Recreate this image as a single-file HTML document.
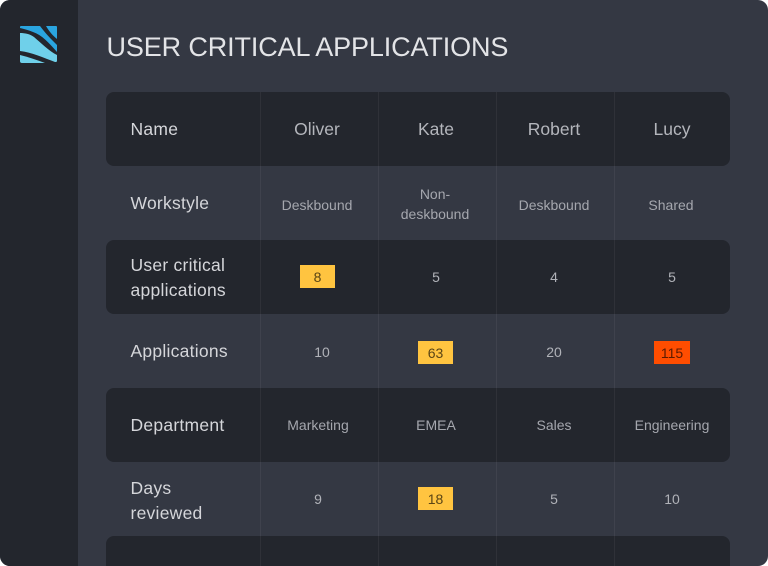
<!DOCTYPE html>
<html><head><meta charset="utf-8">
<style>
html,body{margin:0;padding:0;background:#fff;width:768px;height:566px;overflow:hidden}
#p{position:relative;width:768px;height:566px;overflow:hidden;background:#fff;font-family:"Liberation Sans",sans-serif}
#frame{position:absolute;left:0;top:0;width:768px;height:566px;background:#343843;border-radius:10px;overflow:hidden}
#side{position:absolute;left:0;top:0;width:78px;height:566px;background:#23262d}
.r{position:absolute;left:106px;width:624px;height:74px;background:#23262d;border-radius:8px}
.v{position:absolute;top:92px;width:1px;height:474px;background:rgba(255,255,255,.055)}
.t{position:absolute;white-space:nowrap;line-height:25px;color:#d5d6da;font-size:17.5px;letter-spacing:.25px}
.c{position:absolute;transform:translateX(-50%);white-space:nowrap;text-align:center}
.h{font-size:17.5px;line-height:24px;color:#b4b6bc}
.s{font-size:14px;line-height:20px;color:#a5a7ae}
.n{font-size:14px;line-height:19px;color:#b0b2b8}
.b{position:absolute;width:35px;height:23px;line-height:24px;text-align:center;font-size:14px;background:#ffc440;color:#5a4515}
.b.o{background:#ff4d00;color:#5c1a00;width:36px}
h1{position:absolute;left:106.5px;top:30px;margin:0;font-weight:400;font-size:27px;line-height:34px;color:#e3e4e7;white-space:nowrap;letter-spacing:-.13px}
</style></head>
<body><div id="p"><div id="frame">
<div id="side"></div>
<svg style="position:absolute;left:19px;top:25px" width="39" height="39" viewBox="0 0 39 39">
<path d="M1 2Q1 1 2 1H21C27 9 32 14 38 20V27C30 18 23 10 14 7C9 5 5 4 1 3Z" fill="#2aa5e0"/>
<path d="M27 1H37Q38 1 38 2V14C33 10 30 6 27 1Z" fill="#2aa5e0"/>
<path d="M1 8C6 8 11 9 15 12C22 18 30 26 38 30V36Q38 37 36 37C25 33 12 27 1 26Z" fill="#6fd0ea"/>
<path d="M1 30C9 32 18 35 26 38H3Q1 38 1 36Z" fill="#6fd0ea"/>
</svg>
<h1>USER CRITICAL APPLICATIONS</h1>
<div class="r" style="top:92px"></div>
<div class="r" style="top:240px"></div>
<div class="r" style="top:388px"></div>
<div class="r" style="top:536px;height:30px;border-radius:8px 8px 0 0"></div>
<div class="v" style="left:260px"></div>
<div class="v" style="left:378px"></div>
<div class="v" style="left:496px"></div>
<div class="v" style="left:614px"></div>

<div class="t" style="left:130.5px;top:117px">Name</div>
<div class="t" style="left:130.5px;top:191px">Workstyle</div>
<div class="t" style="left:130.5px;top:253px">User critical<br>applications</div>
<div class="t" style="left:130.5px;top:339px">Applications</div>
<div class="t" style="left:130.5px;top:413px">Department</div>
<div class="t" style="left:130.5px;top:476px">Days<br>reviewed</div>

<div class="c h" style="left:317px;top:117px">Oliver</div>
<div class="c h" style="left:436px;top:117px">Kate</div>
<div class="c h" style="left:554px;top:117px">Robert</div>
<div class="c h" style="left:672px;top:117px">Lucy</div>

<div class="c s" style="left:317px;top:195px">Deskbound</div>
<div class="c s" style="left:435px;top:184px">Non-<br>deskbound</div>
<div class="c s" style="left:554px;top:195px">Deskbound</div>
<div class="c s" style="left:671px;top:195px">Shared</div>

<div class="b" style="left:300px;top:265px">8</div>
<div class="c n" style="left:436px;top:268px">5</div>
<div class="c n" style="left:554px;top:268px">4</div>
<div class="c n" style="left:672px;top:268px">5</div>

<div class="c n" style="left:322px;top:343px">10</div>
<div class="b" style="left:418px;top:341px">63</div>
<div class="c n" style="left:554px;top:343px">20</div>
<div class="b o" style="left:654px;top:341px">115</div>

<div class="c s" style="left:318px;top:415px">Marketing</div>
<div class="c s" style="left:436px;top:415px">EMEA</div>
<div class="c s" style="left:554px;top:415px">Sales</div>
<div class="c s" style="left:672px;top:415px">Engineering</div>

<div class="c n" style="left:318px;top:490px">9</div>
<div class="b" style="left:418px;top:487px">18</div>
<div class="c n" style="left:554px;top:490px">5</div>
<div class="c n" style="left:672px;top:490px">10</div>
</div></div></body></html>
